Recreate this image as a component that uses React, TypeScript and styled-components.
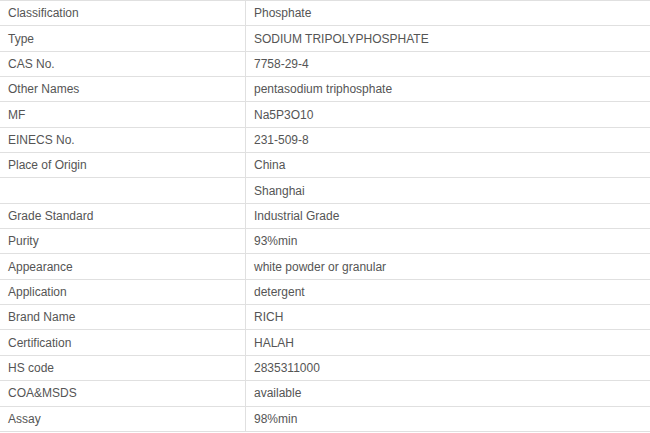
import React from "react";
import styled, { createGlobalStyle } from "styled-components";

const Global = createGlobalStyle`
  html, body { margin: 0; padding: 0; background: #fff; }
  body { font-family: "Liberation Sans", Arial, sans-serif; }
`;

const Table = styled.table`
  width: 650px;
  border-collapse: collapse;
  table-layout: fixed;
  font-family: "Liberation Sans", Arial, sans-serif;
  font-size: 12px;
  color: #555;
`;

const Row = styled.tr`
  height: 25.35px;
  border-top: 1px solid #e0e0e0;
  border-bottom: 1px solid #e0e0e0;
`;

const Cell = styled.td<{ $first?: boolean }>`
  padding: 0 0 0 8px;
  vertical-align: middle;
  line-height: 14px;
  border-right: ${(p) => (p.$first ? "1px solid #e0e0e0" : "none")};
  width: ${(p) => (p.$first ? "237px" : "auto")};
  white-space: nowrap;
`;

const rows: [string, string][] = [
  ["Classification", "Phosphate"],
  ["Type", "SODIUM TRIPOLYPHOSPHATE"],
  ["CAS No.", "7758-29-4"],
  ["Other Names", "pentasodium triphosphate"],
  ["MF", "Na5P3O10"],
  ["EINECS No.", "231-509-8"],
  ["Place of Origin", "China"],
  ["", "Shanghai"],
  ["Grade Standard", "Industrial Grade"],
  ["Purity", "93%min"],
  ["Appearance", "white powder or granular"],
  ["Application", "detergent"],
  ["Brand Name", "RICH"],
  ["Certification", "HALAH"],
  ["HS code", "2835311000"],
  ["COA&MSDS", "available"],
  ["Assay", "98%min"],
];

export default function App() {
  return (
    <>
      <Global />
      <Table>
        <tbody>
          {rows.map(([k, v], i) => (
            <Row key={i}>
              <Cell $first>{k}</Cell>
              <Cell>{v}</Cell>
            </Row>
          ))}
        </tbody>
      </Table>
    </>
  );
}
